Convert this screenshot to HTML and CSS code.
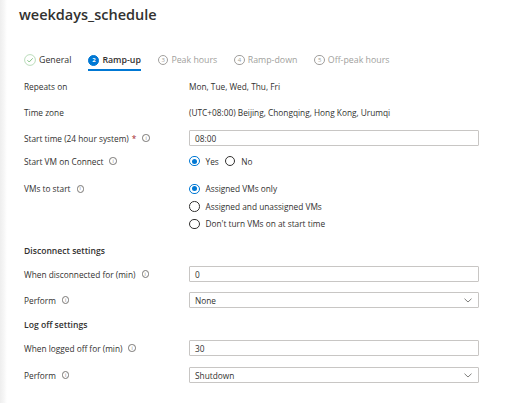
FILE: index.html
```html
<!DOCTYPE html>
<html>
<head>
<meta charset="utf-8">
<link rel="stylesheet" href="styles.css">
</head>
<body>
<div class="app">
  <div class="edge"></div>
  <div class="content">
    <h1 class="title">weekdays_schedule</h1>
    <div class="tabs">
      <div class="tab done">
        <span class="step check"><svg viewBox="0 0 12 12" width="12" height="12"><circle cx="6" cy="6" r="5.4" fill="none" stroke="#a9d3a9" stroke-width="0.8"/><path d="M3.4 6.2 L5.2 8 L8.7 4.3" fill="none" stroke="#6bb56b" stroke-width="0.8"/></svg></span>
        <span class="tab-text">General</span>
      </div>
      <div class="tab active">
        <span class="step filled">2</span>
        <span class="tab-text">Ramp-up</span>
      </div>
      <div class="tab">
        <span class="step">3</span>
        <span class="tab-text">Peak hours</span>
      </div>
      <div class="tab">
        <span class="step">4</span>
        <span class="tab-text">Ramp-down</span>
      </div>
      <div class="tab">
        <span class="step">5</span>
        <span class="tab-text">Off-peak hours</span>
      </div>
    </div>

    <div class="form">
      <div class="row r25">
        <div class="label">Repeats on</div>
        <div class="value">Mon, Tue, Wed, Thu, Fri</div>
      </div>
      <div class="row r26">
        <div class="label">Time zone</div>
        <div class="value">(UTC+08:00) Beijing, Chongqing, Hong Kong, Urumqi</div>
      </div>
      <div class="row r26">
        <div class="label">Start time (24 hour system) <span class="req">*</span> <span class="info">i</span></div>
        <div class="value"><div class="field">08:00</div></div>
      </div>
      <div class="row r20">
        <div class="label">Start VM on Connect <span class="info">i</span></div>
        <div class="value radios-inline">
          <span class="radio on"></span><span class="rtext">Yes</span>
          <span class="radio"></span><span class="rtext">No</span>
        </div>
      </div>
      <div class="row group">
        <div class="label glabel">VMs to start <span class="info">i</span></div>
        <div class="value options">
          <div class="option"><span class="radio on"></span><span class="rtext">Assigned VMs only</span></div>
          <div class="option"><span class="radio"></span><span class="rtext">Assigned and unassigned VMs</span></div>
          <div class="option"><span class="radio"></span><span class="rtext">Don't turn VMs on at start time</span></div>
        </div>
      </div>
      <div class="section r22">Disconnect settings</div>
      <div class="row r24">
        <div class="label">When disconnected for (min) <span class="info">i</span></div>
        <div class="value"><div class="field">0</div></div>
      </div>
      <div class="row r28">
        <div class="label">Perform <span class="info">i</span></div>
        <div class="value"><div class="field select">None<span class="chev"><svg viewBox="0 0 8 5" width="8" height="5"><path d="M0.5 0.7 L4 4 L7.5 0.7" fill="none" stroke="#605e5c" stroke-width="0.8"/></svg></span></div></div>
      </div>
      <div class="section r22">Log off settings</div>
      <div class="row r24">
        <div class="label">When logged off for (min) <span class="info">i</span></div>
        <div class="value"><div class="field">30</div></div>
      </div>
      <div class="row r30">
        <div class="label">Perform <span class="info">i</span></div>
        <div class="value"><div class="field select">Shutdown<span class="chev"><svg viewBox="0 0 8 5" width="8" height="5"><path d="M0.5 0.7 L4 4 L7.5 0.7" fill="none" stroke="#605e5c" stroke-width="0.8"/></svg></span></div></div>
      </div>
    </div>
  </div>
</div>
</body>
</html>
```

FILE: styles.css
```css
html, body {
  margin: 0;
  padding: 0;
  background: #ffffff;
}
body {
  font-family: "Open Sans", "Noto Sans", sans-serif;
  font-size: 8.3px;
  color: #323130;
}
.app {
  display: flex;
  min-height: 403px;
}
.edge {
  width: 7px;
  flex: none;
  background: linear-gradient(to right, #eeeeee, #f7f7f7 60%, #ffffff);
}
.content {
  flex: 1;
  padding-left: 12px;
}
.title {
  margin: 0;
  padding-top: 5px;
  height: 50px;
  box-sizing: border-box;
  font-size: 14.5px;
  font-weight: 600;
  color: #323130;
  line-height: 20px;
}
.tabs {
  display: flex;
  gap: 17px;
  padding-left: 5px;
  height: 21px;
  box-sizing: border-box;
}
.tab {
  display: flex;
  align-items: center;
  gap: 3px;
  height: 21px;
  color: #a19f9d;
  font-size: 8.8px;
  border-bottom: 2px solid transparent;
  box-sizing: border-box;
  padding-top: 1px;
}
.tab.done { color: #323130; }
.tab.active {
  color: #323130;
  font-weight: 600;
  border-bottom-color: #0078d4;
}
.step {
  width: 10.5px;
  height: 10.5px;
  border: 0.8px solid #a19f9d;
  border-radius: 50%;
  display: inline-flex;
  align-items: center;
  justify-content: center;
  font-size: 6px;
  line-height: 1;
  color: #a19f9d;
  box-sizing: border-box;
  font-weight: 400;
}
.step.check {
  border: none;
  width: 12px;
  height: 12px;
}
.step.filled {
  background: #0078d4;
  border-color: #0078d4;
  color: #ffffff;
  font-weight: 700;
  width: 11px;
  height: 11px;
}
.form {
  padding-left: 5px;
  padding-top: 3px;
}
.row {
  display: grid;
  grid-template-columns: 165px 290px;
  align-items: center;
}
.row.group {
  align-items: start;
  height: 69px;
  padding-top: 9px;
  box-sizing: border-box;
}
.glabel { height: 17.5px; }
.r20 { height: 20px; }
.r22 { height: 22px; }
.r24 { height: 24px; }
.r25 { height: 25px; }
.r26 { height: 26px; }
.r28 { height: 28px; }
.r30 { height: 30px; }
.label {
  display: flex;
  align-items: center;
  white-space: nowrap;
}
.req {
  color: #a4262c;
  margin-left: 3px;
}
.info {
  width: 7.5px;
  height: 7.5px;
  border: 0.7px solid #797775;
  border-radius: 50%;
  display: inline-flex;
  align-items: center;
  justify-content: center;
  font-size: 5px;
  line-height: 1;
  color: #797775;
  margin-left: 6px;
  box-sizing: border-box;
}
.value { white-space: nowrap; }
.field {
  height: 16px;
  border: 1px solid #c8c6c4;
  border-radius: 1px;
  box-sizing: border-box;
  padding-left: 5px;
  display: flex;
  align-items: center;
}
.select { justify-content: space-between; padding-right: 6px; }
.chev { display: flex; align-items: center; }
.radios-inline {
  display: flex;
  align-items: center;
}
.radio {
  width: 10.5px;
  height: 10.5px;
  border: 0.8px solid #323130;
  border-radius: 50%;
  box-sizing: border-box;
  display: inline-flex;
  align-items: center;
  justify-content: center;
  flex: none;
}
.radio.on { border-color: #0078d4; }
.radio.on::after {
  content: "";
  width: 5px;
  height: 5px;
  border-radius: 50%;
  background: #0078d4;
}
.rtext { margin-left: 6px; margin-right: 6px; }
.options { display: flex; flex-direction: column; }
.option {
  display: flex;
  align-items: center;
  height: 17.5px;
}
.section {
  display: flex;
  align-items: center;
  font-weight: 600;
  font-size: 8.6px;
}
```
